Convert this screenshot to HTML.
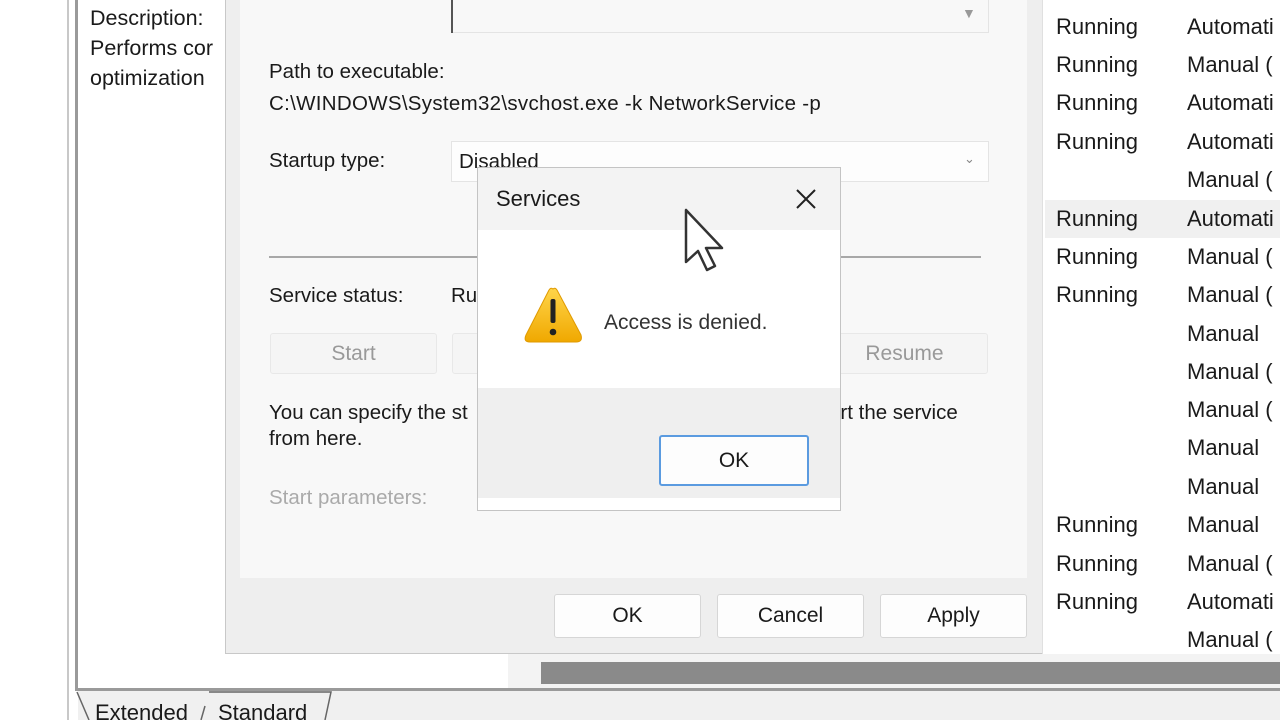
<!DOCTYPE html>
<html><head><meta charset="utf-8"><style>
*{margin:0;padding:0;box-sizing:border-box}
body{width:1280px;height:720px;overflow:hidden;background:#fff;font-family:"Liberation Sans","DejaVu Sans",sans-serif;color:#1a1a1a;position:relative}
.a{position:absolute}
.t{position:absolute;font-size:20.5px;white-space:nowrap}
.r{position:absolute;font-size:22px;white-space:nowrap}
.btn{position:absolute;background:#fdfdfd;border:1px solid #d6d6d6;border-radius:3px;font-size:21px;text-align:center}
</style></head><body>
<div class="a" style="left:67px;top:0;width:2px;height:720px;background:#c8c8c8"></div>
<div class="a" style="left:75px;top:0;width:3px;height:690px;background:#9a9a9a"></div>
<div class="a" style="left:75px;top:688px;width:1205px;height:3px;background:#9a9a9a"></div>
<div class="a" style="left:78px;top:691px;width:1202px;height:29px;background:#f0f0f0"></div>
<div class="t" style="left:90px;top:6px;font-size:21.5px">Description:</div>
<div class="t" style="left:90px;top:36px;font-size:21.5px">Performs cor</div>
<div class="t" style="left:90px;top:66px;font-size:21.5px">optimization</div>

<div class="a" style="left:225px;top:0;width:818px;height:654px;background:#eeeeee;border:1px solid #c8c8c8;border-top:none"></div>
<div class="a" style="left:240px;top:0;width:787px;height:578px;background:#f8f8f8"></div>
<div class="a" style="left:451px;top:0;width:538px;height:33px;border:1px solid #e4e4e4;border-top:none;background:#f8f8f8"></div>
<div class="a" style="left:451px;top:0;width:2px;height:33px;background:#555"></div>
<div class="t" style="left:962px;top:5px;color:#999;font-size:14px">▼</div>
<div class="t" style="left:269px;top:60px">Path to executable:</div>
<div class="t" style="left:269px;top:92px;letter-spacing:0.3px">C:\WINDOWS\System32\svchost.exe -k NetworkService -p</div>
<div class="t" style="left:269px;top:149px">Startup type:</div>
<div class="a" style="left:451px;top:141px;width:538px;height:41px;border:1px solid #e4e4e4;background:#fdfdfd"></div>
<div class="t" style="left:459px;top:150px">Disabled</div>
<div class="t" style="left:964px;top:151px;color:#888;font-size:13px">⌄</div>
<div class="a" style="left:269px;top:256px;width:712px;height:2px;background:#a8a8a8"></div>
<div class="t" style="left:269px;top:284px">Service status:</div>
<div class="t" style="left:451px;top:284px">Ru</div>
<div class="btn" style="left:270px;top:333px;width:167px;height:41px;line-height:39px;color:#999;background:#f5f5f5;border-color:#e8e8e8">Start</div>
<div class="btn" style="left:452px;top:333px;width:30px;height:41px;background:#f5f5f5;border-color:#e8e8e8"></div>
<div class="btn" style="left:821px;top:333px;width:167px;height:41px;line-height:39px;color:#999;background:#f5f5f5;border-color:#e8e8e8">Resume</div>
<div class="t" style="left:269px;top:401px">You can specify the st</div>
<div class="t" style="left:829px;top:401px">art the service</div>
<div class="t" style="left:269px;top:427px">from here.</div>
<div class="t" style="left:269px;top:486px;color:#aaa">Start parameters:</div>
<div class="btn" style="left:554px;top:594px;width:147px;height:44px;line-height:42px">OK</div>
<div class="btn" style="left:717px;top:594px;width:147px;height:44px;line-height:42px">Cancel</div>
<div class="btn" style="left:880px;top:594px;width:147px;height:44px;line-height:42px">Apply</div>

<div class="a" style="left:1042px;top:0;width:238px;height:660px;background:#fff;border-left:1px solid #e0e0e0"></div>
<div class="a" style="left:1045px;top:200px;width:235px;height:38px;background:#f0f0f0"></div>
<div class="a" style="left:508px;top:654px;width:772px;height:34px;background:#f3f3f3"></div>
<div class="a" style="left:541px;top:662px;width:739px;height:22px;background:#8a8a8a"></div>
<div class="r" style="left:1056px;top:14px">Running</div><div class="r" style="left:1187px;top:14px">Automati</div>
<div class="r" style="left:1056px;top:52px">Running</div><div class="r" style="left:1187px;top:52px">Manual (</div>
<div class="r" style="left:1056px;top:90px">Running</div><div class="r" style="left:1187px;top:90px">Automati</div>
<div class="r" style="left:1056px;top:129px">Running</div><div class="r" style="left:1187px;top:129px">Automati</div>
<div class="r" style="left:1187px;top:167px">Manual (</div>
<div class="r" style="left:1056px;top:206px">Running</div><div class="r" style="left:1187px;top:206px">Automati</div>
<div class="r" style="left:1056px;top:244px">Running</div><div class="r" style="left:1187px;top:244px">Manual (</div>
<div class="r" style="left:1056px;top:282px">Running</div><div class="r" style="left:1187px;top:282px">Manual (</div>
<div class="r" style="left:1187px;top:321px">Manual</div>
<div class="r" style="left:1187px;top:359px">Manual (</div>
<div class="r" style="left:1187px;top:397px">Manual (</div>
<div class="r" style="left:1187px;top:435px">Manual</div>
<div class="r" style="left:1187px;top:474px">Manual</div>
<div class="r" style="left:1056px;top:512px">Running</div><div class="r" style="left:1187px;top:512px">Manual</div>
<div class="r" style="left:1056px;top:551px">Running</div><div class="r" style="left:1187px;top:551px">Manual (</div>
<div class="r" style="left:1056px;top:589px">Running</div><div class="r" style="left:1187px;top:589px">Automati</div>
<div class="r" style="left:1187px;top:627px">Manual (</div>

<svg class="a" style="left:75px;top:688px" width="270" height="32"><path d="M2 4 L14 32 M126 32 L130 18 M134 4 L256 4 L250 32" stroke="#666" fill="none" stroke-width="1.5"/></svg>
<div class="r" style="left:95px;top:700px">Extended</div>
<div class="r" style="left:218px;top:700px">Standard</div>

<div class="a" style="left:477px;top:167px;width:364px;height:344px;background:#fff;border:1px solid #c4c4c4"></div>
<div class="a" style="left:478px;top:168px;width:362px;height:62px;background:#f3f3f3"></div>
<div class="a" style="left:478px;top:388px;width:362px;height:110px;background:#efefef"></div>
<div class="t" style="left:496px;top:186px;font-size:22px">Services</div>
<svg class="a" style="left:795px;top:188px" width="22" height="22"><path d="M2 2L20 20M20 2L2 20" stroke="#222" stroke-width="2"/></svg>
<svg class="a" style="left:522px;top:285px" width="62" height="60"><defs><linearGradient id="g" x1="0" y1="0" x2="0" y2="1"><stop offset="0" stop-color="#ffd54a"/><stop offset="1" stop-color="#f0a800"/></linearGradient></defs><path d="M31 4 Q33 2 35 5 L59 50 Q61 57 54 57 L8 57 Q1 57 4 50 L27 5 Q29 2 31 4Z" fill="url(#g)" stroke="#e09a00"/><rect x="28.5" y="14" width="5" height="24" rx="2" fill="#222"/><circle cx="31" cy="47" r="3.3" fill="#222"/></svg>
<div class="t" style="left:604px;top:311px;font-size:21px;color:#333">Access is denied.</div>
<div class="a" style="left:659px;top:435px;width:150px;height:51px;background:#fdfdfd;border:2px solid #5b9be0;border-radius:3px;font-size:21px;text-align:center;line-height:47px">OK</div>
<svg class="a" style="left:682px;top:206px" width="46" height="68"><path d="M4 4 L4 56 L16 45 L25 64 L33 60 L24 42 L40 42 Z" fill="#fff" stroke="#333" stroke-width="2.5" stroke-linejoin="round"/></svg>
</body></html>
